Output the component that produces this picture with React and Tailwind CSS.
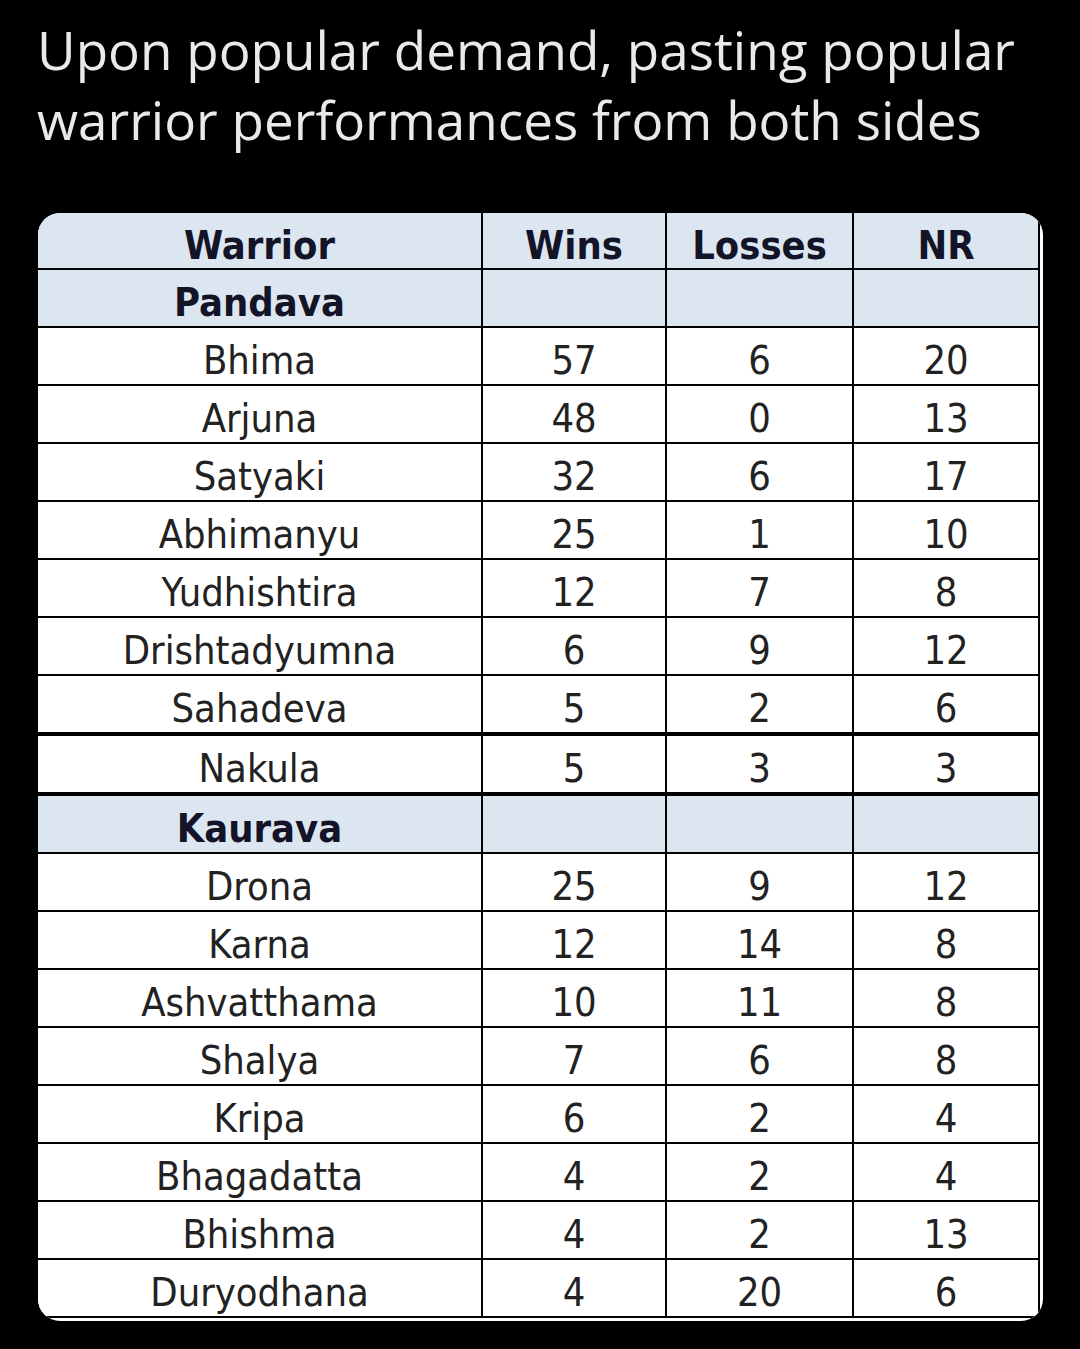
import React from 'react';

const pandava = [
  ['Bhima', 57, 6, 20],
  ['Arjuna', 48, 0, 13],
  ['Satyaki', 32, 6, 17],
  ['Abhimanyu', 25, 1, 10],
  ['Yudhishtira', 12, 7, 8],
  ['Drishtadyumna', 6, 9, 12],
  ['Sahadeva', 5, 2, 6],
  ['Nakula', 5, 3, 3],
];

const kaurava = [
  ['Drona', 25, 9, 12],
  ['Karna', 12, 14, 8],
  ['Ashvatthama', 10, 11, 8],
  ['Shalya', 7, 6, 8],
  ['Kripa', 6, 2, 4],
  ['Bhagadatta', 4, 2, 4],
  ['Bhishma', 4, 2, 13],
  ['Duryodhana', 4, 20, 6],
];

const Cells = ({ cells }) => (
  <>
    <div className="w-[445px] flex items-center justify-center border-r-2 border-black pt-[10px]">{cells[0]}</div>
    <div className="w-[184px] flex items-center justify-center border-r-2 border-black pt-[10px]">{cells[1]}</div>
    <div className="w-[187px] flex items-center justify-center border-r-2 border-black pt-[10px]">{cells[2]}</div>
    <div className="w-[186px] flex items-center justify-center border-r-2 border-black pt-[10px]">{cells[3]}</div>
  </>
);

const Row = ({ cells, head, thick }) => {
  const bg = head ? 'bg-[#dce6f1]' : 'bg-white';
  const text = head ? 'font-bold text-[#141428]' : 'text-[#222222]';
  return (
    <div className={`flex border-black ${thick ? 'h-[60px] border-b-4' : 'h-[58px] border-b-2'} ${bg} ${text}`}>
      <Cells cells={cells} />
    </div>
  );
};

export default function App() {
  return (
    <div className="w-[1080px] h-[1349px] bg-black overflow-hidden">
      <h1
        className="pl-[37px] pt-[15px] text-[53px] leading-[70px] text-[#e7e9ea] font-normal"
        style={{ fontFamily: '"Open Sans", "Noto Sans", sans-serif' }}
      >
        Upon popular demand, pasting popular
        <br />
        warrior performances from both sides
      </h1>
      <div
        className="ml-[38px] mt-[58px] w-[1005px] bg-white pr-[3px] pb-[3px] rounded-[22px] overflow-hidden text-[39.5px] font-stretch-condensed"
        style={{ fontFamily: '"DejaVu Sans Condensed", "DejaVu Sans", sans-serif' }}
      >
        <div className="flex h-[57px] border-b-2 border-black bg-[#dce6f1] font-bold text-[#141428]">
          <Cells cells={['Warrior', 'Wins', 'Losses', 'NR']} />
        </div>
        <Row cells={['Pandava', '', '', '']} head />
        {pandava.map((r, i) => (
          <Row key={r[0]} cells={r} thick={i >= 6} />
        ))}
        <Row cells={['Kaurava', '', '', '']} head />
        {kaurava.map((r) => (
          <Row key={r[0]} cells={r} />
        ))}
      </div>
    </div>
  );
}
